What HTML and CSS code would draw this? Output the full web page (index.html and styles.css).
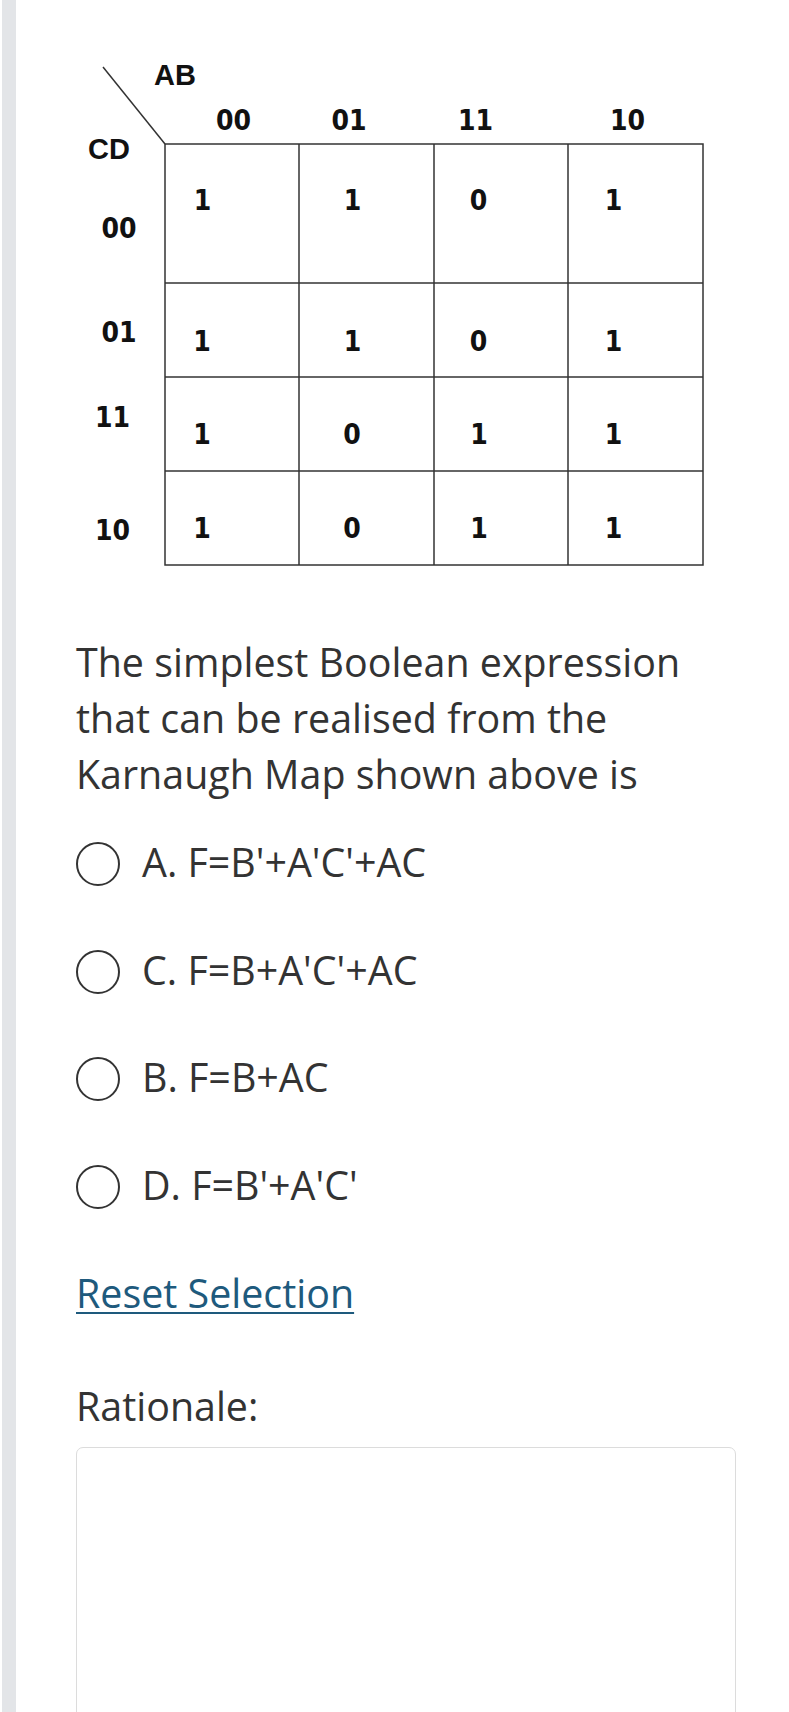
FILE: index.html
```html
<!DOCTYPE html>
<html lang="en">
<head>
<meta charset="utf-8">
<title>Karnaugh Map Question</title>
<link rel="stylesheet" href="styles.css">
</head>
<body>
<div class="page">
  <div class="content">
    <svg class="kmap" viewBox="76 0 659 590" width="659" height="590" xmlns="http://www.w3.org/2000/svg">
      <line class="km-line" x1="103" y1="67" x2="165" y2="144"/>
      <rect class="km-line km-box" x="165" y="144" width="538" height="421"/>
      <line class="km-line" x1="299" y1="144" x2="299" y2="565"/>
      <line class="km-line" x1="434" y1="144" x2="434" y2="565"/>
      <line class="km-line" x1="568" y1="144" x2="568" y2="565"/>
      <line class="km-line" x1="165" y1="283" x2="703" y2="283"/>
      <line class="km-line" x1="165" y1="377" x2="703" y2="377"/>
      <line class="km-line" x1="165" y1="471" x2="703" y2="471"/>

      <text class="km-var" x="175" y="85">AB</text>
      <text class="km-var" x="109" y="159">CD</text>

      <text class="km-num" x="233.5" y="130">00</text>
      <text class="km-num" x="349" y="130">01</text>
      <text class="km-num" x="475.5" y="130">11</text>
      <text class="km-num" x="627.5" y="130">10</text>

      <text class="km-num" x="119" y="238">00</text>
      <text class="km-num" x="119" y="342">01</text>
      <text class="km-num" x="112.5" y="427">11</text>
      <text class="km-num" x="112.5" y="540">10</text>

      <text class="km-num" x="202.5" y="210">1</text>
      <text class="km-num" x="352.5" y="210">1</text>
      <text class="km-num" x="478.5" y="210">0</text>
      <text class="km-num" x="613.5" y="210">1</text>

      <text class="km-num" x="202" y="351">1</text>
      <text class="km-num" x="352.5" y="351">1</text>
      <text class="km-num" x="478.5" y="351">0</text>
      <text class="km-num" x="613.5" y="351">1</text>

      <text class="km-num" x="202" y="444">1</text>
      <text class="km-num" x="352" y="444">0</text>
      <text class="km-num" x="479" y="444">1</text>
      <text class="km-num" x="613.5" y="444">1</text>

      <text class="km-num" x="202" y="538">1</text>
      <text class="km-num" x="352" y="538">0</text>
      <text class="km-num" x="479" y="538">1</text>
      <text class="km-num" x="613.5" y="538">1</text>
    </svg>

    <p class="question">The simplest Boolean expression that can be realised from the Karnaugh Map shown above is</p>

    <div class="options">
      <label class="option"><span class="radio"></span><span class="opt-text">A. F=B'+A'C'+AC</span></label>
      <label class="option"><span class="radio"></span><span class="opt-text">C. F=B+A'C'+AC</span></label>
      <label class="option"><span class="radio"></span><span class="opt-text">B. F=B+AC</span></label>
      <label class="option"><span class="radio"></span><span class="opt-text">D. F=B'+A'C'</span></label>
    </div>

    <a class="reset" href="#">Reset Selection</a>

    <div class="rationale-label">Rationale:</div>
    <div class="textarea"></div>
  </div>
</div>
</body>
</html>
```

FILE: styles.css
```css
* { box-sizing: border-box; }

body {
  margin: 0;
  background: #ffffff;
  font-family: "Open Sans", "Liberation Sans", sans-serif;
  color: #333333;
}

.page {
  margin-left: 2px;
  border-left: 14px solid #e3e5e8;
  min-height: 1712px;
}

.content {
  padding: 0 53px 0 60px;
}

.kmap {
  display: block;
}

.km-line {
  stroke: #333333;
  stroke-width: 1.5;
  fill: none;
}

.km-var {
  font-family: "Liberation Sans", Arial, sans-serif;
  font-weight: 700;
  font-size: 29px;
  fill: #111111;
  text-anchor: middle;
}

.km-num {
  font-family: "DejaVu Sans Condensed", "DejaVu Sans", sans-serif;
  font-stretch: condensed;
  font-weight: 700;
  font-size: 28px;
  fill: #111111;
  text-anchor: middle;
}

.question {
  margin: 44px 0 0;
  font-size: 39.4px;
  line-height: 56px;
  font-weight: 400;
}

.options {
  margin-top: 40px;
  display: flex;
  flex-direction: column;
  gap: 63.5px;
}

.option {
  display: flex;
  align-items: center;
  height: 44px;
  gap: 22px;
}

.radio {
  flex: 0 0 44px;
  width: 44px;
  height: 44px;
  border: 2px solid #333333;
  border-radius: 50%;
  background: #ffffff;
}

.opt-text {
  font-size: 39.4px;
  line-height: 44px;
  padding-bottom: 4px;
}

.reset {
  display: inline-block;
  margin-top: 56px;
  font-size: 39.4px;
  line-height: 56px;
  color: #1e5a7d;
  text-decoration: underline;
  text-decoration-thickness: 2px;
  text-underline-offset: 4px;
}

.rationale-label {
  margin-top: 57px;
  font-size: 39.4px;
  line-height: 56px;
}

.textarea {
  margin-top: 13.5px;
  height: 320px;
  border: 1.5px solid #dcdcdc;
  border-radius: 7px;
  background: #ffffff;
}
```
